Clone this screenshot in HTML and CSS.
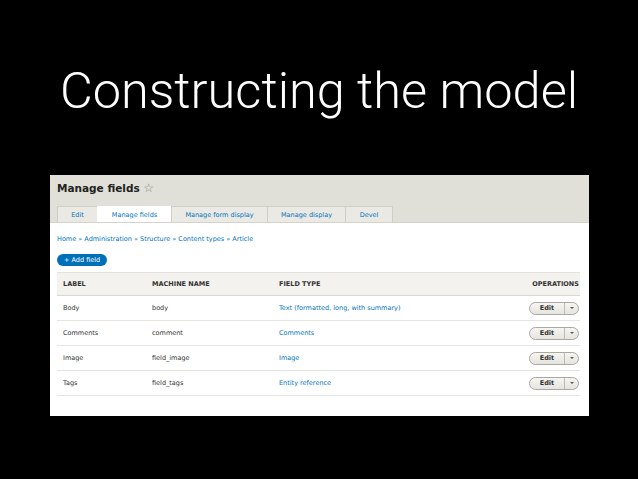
FILE: index.html
```html
<!DOCTYPE html>
<html lang="en">
<head>
    <meta charset="UTF-8">
    <title>Constructing the model</title>
    <link rel="stylesheet" href="styles.css">
</head>
<body>
    <div class="slide">
        <h1 class="slide-title">Constructing the model</h1>
        <div class="shot">
            <div class="page-head">
                <div class="page-title">Manage fields <span class="star">&#9734;</span></div>
                <div class="tabs">
                    <a class="tab">Edit</a>
                    <a class="tab active">Manage fields</a>
                    <a class="tab">Manage form display</a>
                    <a class="tab">Manage display</a>
                    <a class="tab">Devel</a>
                </div>
            </div>
            <div class="content">
                <div class="breadcrumb">
                    <a>Home</a> &raquo; <a>Administration</a> &raquo; <a>Structure</a> &raquo; <a>Content types</a> &raquo; <a>Article</a>
                </div>
                <a class="add-btn">+ Add field</a>
                <table class="fields">
                    <thead>
                        <tr>
                            <th class="c-label">Label</th>
                            <th class="c-machine">Machine name</th>
                            <th class="c-type">Field type</th>
                            <th class="c-ops">Operations</th>
                        </tr>
                    </thead>
                    <tbody>
                        <tr>
                            <td>Body</td>
                            <td>body</td>
                            <td><a>Text (formatted, long, with summary)</a></td>
                            <td class="c-ops"><span class="drop"><span class="drop-main">Edit</span><span class="drop-arrow"></span></span></td>
                        </tr>
                        <tr>
                            <td>Comments</td>
                            <td>comment</td>
                            <td><a>Comments</a></td>
                            <td class="c-ops"><span class="drop"><span class="drop-main">Edit</span><span class="drop-arrow"></span></span></td>
                        </tr>
                        <tr>
                            <td>Image</td>
                            <td>field_image</td>
                            <td><a>Image</a></td>
                            <td class="c-ops"><span class="drop"><span class="drop-main">Edit</span><span class="drop-arrow"></span></span></td>
                        </tr>
                        <tr>
                            <td>Tags</td>
                            <td>field_tags</td>
                            <td><a>Entity reference</a></td>
                            <td class="c-ops"><span class="drop"><span class="drop-main">Edit</span><span class="drop-arrow"></span></span></td>
                        </tr>
                    </tbody>
                </table>
            </div>
        </div>
    </div>
</body>
</html>
```

FILE: styles.css
```css
html, body {
    margin: 0;
    background: #000;
}
.slide {
    width: 638px;
    height: 479px;
    overflow: hidden;
}
.slide-title {
    margin: 0;
    padding-top: 63px;
    height: 175px;
    box-sizing: border-box;
    text-align: center;
    color: #fff;
    font-family: Roboto, "Liberation Sans", sans-serif;
    font-weight: 300;
    font-size: 50.5px;
    line-height: 56px;
}
.shot {
    margin-left: 50px;
    width: 539px;
    height: 241px;
    background: #fff;
    font-family: "DejaVu Sans", Verdana, sans-serif;
    font-size: 6.5px;
    color: #333;
}
.page-head {
    background: #e0dfd8;
    height: 48px;
    padding-left: 7px;
    border-bottom: 1px solid #d4d3cc;
    box-sizing: border-box;
    display: flex;
    flex-direction: column;
    justify-content: space-between;
}
.page-title {
    padding-top: 6px;
    font-size: 10.5px;
    font-weight: bold;
    color: #222;
}
.star {
    font-weight: normal;
    color: #8a8a8a;
    font-size: 12px;
}
.tabs {
    display: flex;
    height: 16px;
}
.tab {
    display: flex;
    align-items: center;
    justify-content: center;
    background: #eae9e3;
    border: 1px solid #cfcec6;
    border-bottom: none;
    border-right: none;
    color: #0074bd;
    box-sizing: border-box;
}
.tab:last-child {
    border-right: 1px solid #cfcec6;
}
.tab:nth-child(1) { width: 40px; }
.tab:nth-child(2) { width: 74px; }
.tab:nth-child(3) { width: 96px; }
.tab:nth-child(4) { width: 78px; }
.tab:nth-child(5) { width: 48px; }
.tab.active {
    background: #fff;
    border-color: #fff;
}
.content {
    padding: 12px 9px 0 7px;
}
.breadcrumb {
    color: #0074bd;
    font-size: 6.5px;
    height: 10px;
}
.add-btn {
    display: inline-block;
    margin-top: 9px;
    background: #0071b8;
    color: #fff;
    border-radius: 7px;
    padding: 2px 7px;
    height: 12px;
    line-height: 8px;
    box-sizing: border-box;
}
.fields {
    margin-top: 6px;
    width: 100%;
    border-collapse: collapse;
}
.fields th {
    background: #f3f2ee;
    text-transform: uppercase;
    font-weight: bold;
    text-align: left;
    height: 22px;
    padding: 0 6px;
    border-top: 1px solid #e3e2dc;
    border-bottom: 1px solid #d8d7d0;
    color: #333;
}
.fields td {
    height: 24px;
    padding: 0 6px;
    border-bottom: 1px solid #e6e5e0;
}
.fields a {
    color: #0074bd;
}
.c-label { width: 77px; }
.c-machine { width: 115px; }
.fields .c-ops {
    text-align: right;
    padding-right: 1px;
}
.drop {
    display: inline-flex;
    height: 13px;
    border: 1px solid #a9a8a2;
    border-radius: 7px;
    background: linear-gradient(#f6f5f1, #e5e4de);
    box-sizing: border-box;
    vertical-align: middle;
}
.drop-main {
    width: 34px;
    text-align: center;
    line-height: 11px;
    font-weight: bold;
    color: #333;
    border-right: 1px solid #bcbbb5;
}
.drop-arrow {
    width: 13px;
    display: flex;
    align-items: center;
    justify-content: center;
}
.drop-arrow::after {
    content: "";
    border-left: 2px solid transparent;
    border-right: 2px solid transparent;
    border-top: 2px solid #555;
}
```
